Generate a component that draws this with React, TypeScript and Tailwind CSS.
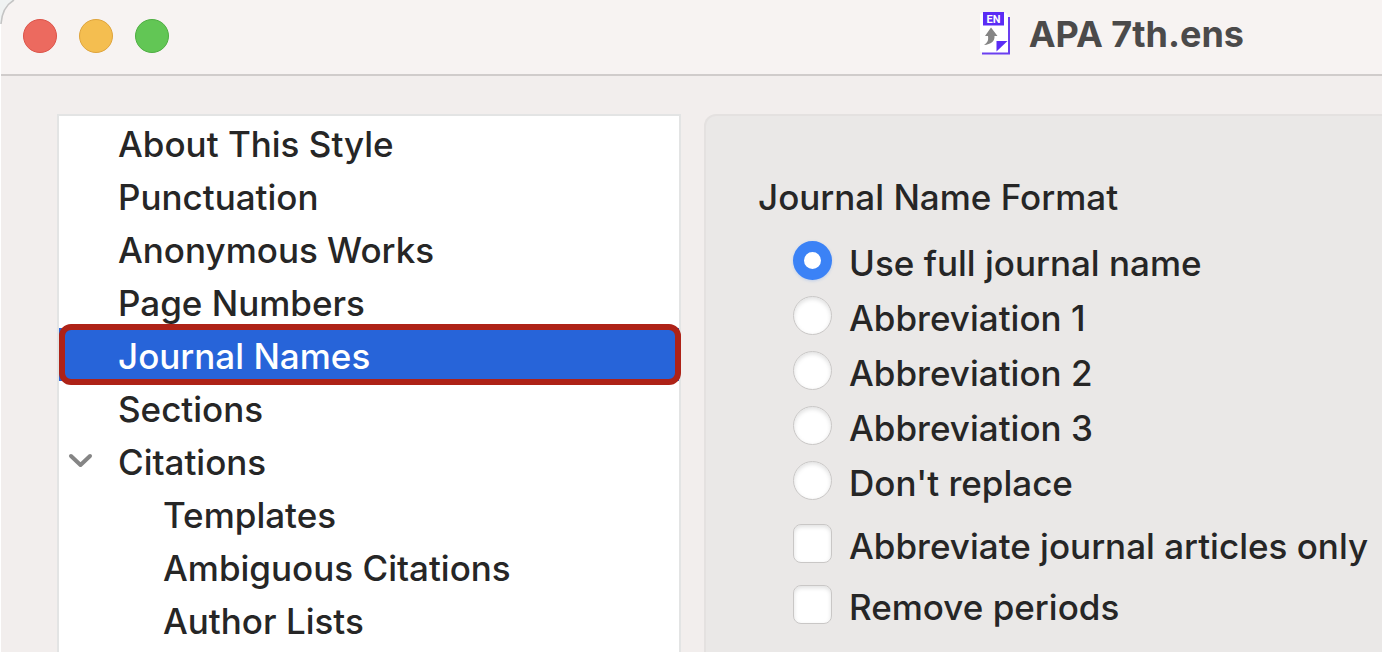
import { useState } from "react";

const sections = [
  { label: "About This Style" },
  { label: "Punctuation" },
  { label: "Anonymous Works" },
  { label: "Page Numbers" },
  { label: "Journal Names" },
  { label: "Sections" },
  { label: "Citations", expandable: true },
  { label: "Templates", nested: true },
  { label: "Ambiguous Citations", nested: true },
  { label: "Author Lists", nested: true },
];

const formats = [
  "Use full journal name",
  "Abbreviation 1",
  "Abbreviation 2",
  "Abbreviation 3",
  "Don't replace",
];

const options = ["Abbreviate journal articles only", "Remove periods"];

const StyleFileIcon = () => (
  <svg width="32" height="44" viewBox="0 0 32 44" aria-hidden="true">
    <path d="M3 6h28v37.500H3z" fill="#6b3ff0" />
    <path d="M1 4q0-2 2-2h24l2 3v36.500H3q-2 0-2-2z" fill="#ffffff" />
    <path d="M4 1h21v13.500H4z" fill="#5b2cf5" />
    <text
      x="14.5"
      y="12"
      textAnchor="middle"
      fontSize="11"
      fontWeight="700"
      fontFamily="Roboto, sans-serif"
      fill="#ffffff"
    >
      EN
    </text>
    <path
      d="M12 16.500 L18.500 25 H15.500 C16 30 12 33.500 5 34 C9 31.500 9.500 29 9 25 H6 Z"
      fill="#858585"
    />
    <path d="M17.500 30H28.500L17.500 40.500z" fill="#5b2cf5" />
  </svg>
);

const WindowCorner = () => (
  <svg
    className="pointer-events-none absolute top-0 left-0"
    width="24"
    height="28"
    viewBox="0 0 24 28"
    aria-hidden="true"
  >
    <path d="M0 0H14Q2 7 1 24H0z" fill="#eff2f2" />
    <path d="M14 0Q2 7 1 24" fill="none" stroke="#c4c4c4" strokeWidth="1.5" />
  </svg>
);

const Sidebar = () => {
  const [active, setActive] = useState("Journal Names");

  return (
    <nav className="w-156 shrink-0 border-2 border-b-0 border-[#e3e4e4] bg-white">
      <ul>
        {sections.map((item) => (
          <li key={item.label} className="relative">
            <button
              type="button"
              onClick={() => setActive(item.label)}
              className={`flex h-[53px] w-full items-center pt-0.5 text-left ${
                item.nested ? "pl-26" : "pl-[59px]"
              } ${item.label === active ? "bg-[#2764d9] text-white" : ""}`}
            >
              {item.label}
            </button>
            {item.expandable && (
              <svg
                className="pointer-events-none absolute top-4 left-2"
                width="26"
                height="20"
                viewBox="0 0 26 20"
                fill="none"
                stroke="#858585"
                strokeWidth="4"
                strokeLinecap="round"
                strokeLinejoin="round"
                aria-hidden="true"
              >
                <path d="M4 6l9.500 9 9.500-9" />
              </svg>
            )}
            {item.label === active && (
              <div className="pointer-events-none absolute -inset-y-1 -right-0.5 left-0 rounded-xl border-6 border-[#ae2217]" />
            )}
          </li>
        ))}
      </ul>
    </nav>
  );
};

const JournalNamesPanel = () => (
  <main className="-mr-4 min-w-0 flex-1 rounded-tl-xl border-2 border-b-0 border-[#e4e1e0] bg-[#eae8e7] pt-[57px] pl-13 whitespace-nowrap">
    <fieldset>
      <legend className="leading-12">Journal Name Format</legend>
      <div className="pt-3 pl-[35px]">
        {formats.map((format, index) => (
          <label key={format} className="flex h-[55px] items-center gap-[17px]">
            <input
              type="radio"
              name="format"
              defaultChecked={index === 0}
              className="size-[39px] shrink-0 appearance-none rounded-full border border-[#c9c7c6] bg-white shadow-[inset_0_2px_4px_#00000020] checked:border-[11px] checked:border-[#3b82f6] checked:shadow-[0_1px_3px_#3b82f640]"
            />
            <span className="pt-1">{format}</span>
          </label>
        ))}
      </div>
    </fieldset>
    <div className="pt-[5px] pl-[35px]">
      {options.map((option) => (
        <label key={option} className="flex h-[61px] items-center gap-[17px]">
          <input
            type="checkbox"
            className="size-[39px] shrink-0 appearance-none rounded-lg border border-[#c9c7c6] bg-white shadow-[inset_0_2px_4px_#00000020] checked:bg-[#3b82f6]"
          />
          <span className="pt-1">{option}</span>
        </label>
      ))}
    </div>
  </main>
);

const App = () => (
  <div className="relative h-screen overflow-hidden bg-white pl-px font-['Inter',sans-serif] text-[35px] leading-[44px] font-medium text-[#262626]">
    <div className="flex h-full flex-col overflow-hidden bg-[#f2eeed]">
      <header className="flex h-19 shrink-0 items-center border-b-2 border-[#d0cccb] bg-[#f7f3f2]">
        <div className="flex flex-1 gap-[22px] pb-0.5 pl-[22px]">
          <button type="button" aria-label="Close" className="size-[34px] rounded-full border border-[#dc5349] bg-[#ec6a5f]" />
          <button type="button" aria-label="Minimize" className="size-[34px] rounded-full border border-[#dfa43c] bg-[#f4be50]" />
          <button type="button" aria-label="Zoom" className="size-[34px] rounded-full border border-[#4eae42] bg-[#62c655]" />
        </div>
        <div className="mr-[138px] flex items-center gap-[18px] pb-2">
          <StyleFileIcon />
          <h1 className="pt-0.5 text-[36px] font-bold text-[#4b4a4a]">APA 7th.ens</h1>
        </div>
      </header>
      <div className="flex min-h-0 flex-1 gap-[23px] pt-[38px] pl-14">
        <Sidebar />
        <JournalNamesPanel />
      </div>
    </div>
    <WindowCorner />
  </div>
);

export default App;
